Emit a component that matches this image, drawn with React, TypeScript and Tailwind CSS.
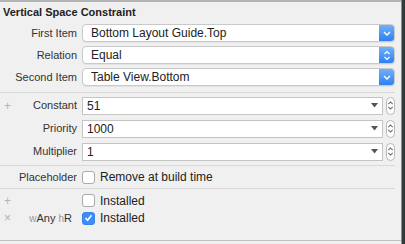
const font = { fontFamily: '"Liberation Sans", Arial, sans-serif' };

const DownChevron = () => (
  <svg width="8" height="5" viewBox="0 0 8 5">
    <polyline points="1,1 4,4 7,1" fill="none" stroke="white" strokeWidth="1.4" />
  </svg>
);

const UpDownChevron = ({ color = "white" }: { color?: string }) => (
  <svg width="8" height="11" viewBox="0 0 8 11">
    <polyline points="1.5,4 4,1.5 6.5,4" fill="none" stroke={color} strokeWidth="1.2" />
    <polyline points="1.5,7 4,9.5 6.5,7" fill="none" stroke={color} strokeWidth="1.2" />
  </svg>
);

const Popup = ({ value, updown }: { value: string; updown?: boolean }) => (
  <div className="flex-1 h-[18px] flex items-center bg-white border border-[#c9c9c9] rounded-[4px] overflow-hidden shadow-[0_1px_0_rgba(0,0,0,0.05)]">
    <span className="flex-1 pl-[8px] text-[12px] text-[#222]">{value}</span>
    <div className="w-[15px] h-full flex items-center justify-center bg-gradient-to-b from-[#6fb0fa] to-[#2f7ff2]">
      {updown ? <UpDownChevron /> : <DownChevron />}
    </div>
  </div>
);

const Combo = ({ value }: { value: string }) => (
  <div className="flex-1 flex items-center gap-[3px]">
    <div className="flex-1 h-[18px] flex items-center bg-white border border-[#c4c4c4]">
      <span className="flex-1 pl-[4px] text-[12px] text-[#222]">{value}</span>
      <svg width="7" height="5" viewBox="0 0 7 5" className="mr-[4px]">
        <polygon points="0,0 7,0 3.5,4.5" fill="#555" />
      </svg>
    </div>
    <div className="w-[9px] h-[18px] flex items-center justify-center bg-white border border-[#b8b8b8] rounded-full">
      <UpDownChevron color="#6a6a6a" />
    </div>
  </div>
);

const Check = ({ on }: { on?: boolean }) =>
  on ? (
    <div className="w-[13px] h-[13px] rounded-[3px] bg-[#3f8cf8] border border-[#3a82ec] flex items-center justify-center">
      <svg width="9" height="8" viewBox="0 0 9 8">
        <polyline points="1.5,4 3.6,6.3 7.5,1.2" fill="none" stroke="white" strokeWidth="1.6" />
      </svg>
    </div>
  ) : (
    <div className="w-[13px] h-[13px] rounded-[3px] bg-white border border-[#a9a9a9]" />
  );

const Row = ({
  label,
  mark,
  h = "h-[22px]",
  children,
}: {
  label: React.ReactNode;
  mark?: string;
  h?: string;
  children: React.ReactNode;
}) => (
  <div className={`flex items-center ${h}`}>
    <span className="w-[15px] text-center text-[12px] text-[#b3b3b3]">{mark}</span>
    <span className="w-[62px] text-right text-[11px] text-[#333] whitespace-nowrap">{label}</span>
    <div className="ml-[5px] flex-1 flex items-center">{children}</div>
  </div>
);

const Line = () => <div className="h-px bg-[#d9d9d9]" />;

export default function App() {
  return (
    <div className="w-[405px] h-[244px] flex bg-[#f0f0f0] overflow-hidden" style={font}>
      <div className="flex-1 flex flex-col border-t-2 border-[#b4b4b4] pr-[6px]">
        <div className="h-[20px] flex items-center pl-[3px] text-[11px] font-bold text-[#222]">
          Vertical Space Constraint
        </div>
        <Row label="First Item">
          <Popup value="Bottom Layout Guide.Top" />
        </Row>
        <Row label="Relation">
          <Popup value="Equal" updown />
        </Row>
        <Row label="Second Item">
          <Popup value="Table View.Bottom" />
        </Row>
        <div className="h-[4px]" />
        <Line />
        <div className="h-[1px]" />
        <Row label="Constant" mark="+" h="h-[23px]">
          <Combo value="51" />
        </Row>
        <Row label="Priority" h="h-[23px]">
          <Combo value="1000" />
        </Row>
        <Row label="Multiplier" h="h-[23px]">
          <Combo value="1" />
        </Row>
        <div className="h-[2px]" />
        <Line />
        <Row label="Placeholder">
          <Check />
          <span className="ml-[5px] text-[12px] text-[#222]">Remove at build time</span>
        </Row>
        <Line />
        <div className="h-[2px]" />
        <Row label="" mark="+" h="h-[19px]">
          <Check />
          <span className="ml-[5px] text-[12px] text-[#222]">Installed</span>
        </Row>
        <Row
          label={
            <span className="pr-[5px]">
              <span className="text-[10px] text-[#999]">w</span>Any{" "}
              <span className="text-[10px] text-[#999]">h</span>R
            </span>
          }
          mark="×"
          h="h-[16px]"
        >
          <Check on />
          <span className="ml-[5px] text-[12px] text-[#222]">Installed</span>
        </Row>
        <div className="flex-1" />
        <div className="h-px bg-[#c2c2c2] -mr-[6px]" />
        <div className="h-[3px]" />
      </div>
      <div className="w-[4px] bg-[#2f3d3a] border-l border-[#8a9290]" />
    </div>
  );
}
